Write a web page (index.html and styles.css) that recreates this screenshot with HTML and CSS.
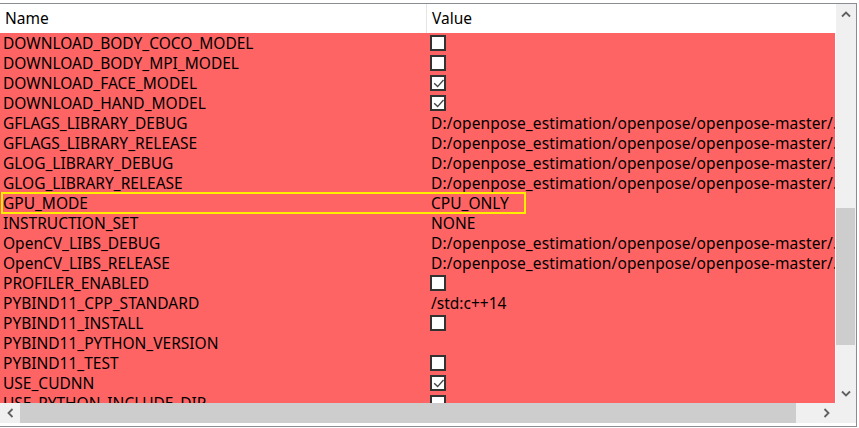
FILE: index.html
```html
<!DOCTYPE html>
<html>
<head>
<meta charset="utf-8">
<link rel="stylesheet" href="styles.css">
</head>
<body>
<div class="frame">
  <div class="viewport">
    <div class="header">
      <div class="hcell name-col">Name</div>
      <div class="hcell value-col">Value</div>
    </div>
    <div class="rows">
      <div class="row"><div class="cell name-col">DOWNLOAD_BODY_COCO_MODEL</div><div class="cell value-col"><span class="cb"></span></div></div>
      <div class="row"><div class="cell name-col">DOWNLOAD_BODY_MPI_MODEL</div><div class="cell value-col"><span class="cb"></span></div></div>
      <div class="row"><div class="cell name-col">DOWNLOAD_FACE_MODEL</div><div class="cell value-col"><span class="cb"><svg class="tick" width="12" height="12" viewBox="0 0 12 12"><path d="M1.2 6.3 L4.6 9.6 L10.5 3" fill="none" stroke="#444" stroke-width="1.4"/></svg></span></div></div>
      <div class="row"><div class="cell name-col">DOWNLOAD_HAND_MODEL</div><div class="cell value-col"><span class="cb"><svg class="tick" width="12" height="12" viewBox="0 0 12 12"><path d="M1.2 6.3 L4.6 9.6 L10.5 3" fill="none" stroke="#444" stroke-width="1.4"/></svg></span></div></div>
      <div class="row"><div class="cell name-col">GFLAGS_LIBRARY_DEBUG</div><div class="cell value-col path">D:/openpose_estimation/openpose/openpose-master/./3rdparty/windows/caffe3rdparty/lib/gflagsd.lib</div></div>
      <div class="row"><div class="cell name-col">GFLAGS_LIBRARY_RELEASE</div><div class="cell value-col path">D:/openpose_estimation/openpose/openpose-master/./3rdparty/windows/caffe3rdparty/lib/gflags.lib</div></div>
      <div class="row"><div class="cell name-col">GLOG_LIBRARY_DEBUG</div><div class="cell value-col path">D:/openpose_estimation/openpose/openpose-master/./3rdparty/windows/caffe3rdparty/lib/glogd.lib</div></div>
      <div class="row"><div class="cell name-col">GLOG_LIBRARY_RELEASE</div><div class="cell value-col path">D:/openpose_estimation/openpose/openpose-master/./3rdparty/windows/caffe3rdparty/lib/glog.lib</div></div>
      <div class="row marked"><div class="cell name-col">GPU_MODE</div><div class="cell value-col">CPU_ONLY</div><div class="mark"></div></div>
      <div class="row"><div class="cell name-col">INSTRUCTION_SET</div><div class="cell value-col">NONE</div></div>
      <div class="row"><div class="cell name-col">OpenCV_LIBS_DEBUG</div><div class="cell value-col path">D:/openpose_estimation/openpose/openpose-master/./3rdparty/windows/opencv/x64/vc15/lib/opencv_world345d.lib</div></div>
      <div class="row"><div class="cell name-col">OpenCV_LIBS_RELEASE</div><div class="cell value-col path">D:/openpose_estimation/openpose/openpose-master/./3rdparty/windows/opencv/x64/vc15/lib/opencv_world345.lib</div></div>
      <div class="row"><div class="cell name-col">PROFILER_ENABLED</div><div class="cell value-col"><span class="cb"></span></div></div>
      <div class="row"><div class="cell name-col">PYBIND11_CPP_STANDARD</div><div class="cell value-col">/std:c++14</div></div>
      <div class="row"><div class="cell name-col">PYBIND11_INSTALL</div><div class="cell value-col"><span class="cb"></span></div></div>
      <div class="row"><div class="cell name-col">PYBIND11_PYTHON_VERSION</div><div class="cell value-col"></div></div>
      <div class="row"><div class="cell name-col">PYBIND11_TEST</div><div class="cell value-col"><span class="cb"></span></div></div>
      <div class="row"><div class="cell name-col">USE_CUDNN</div><div class="cell value-col"><span class="cb"><svg class="tick" width="12" height="12" viewBox="0 0 12 12"><path d="M1.2 6.3 L4.6 9.6 L10.5 3" fill="none" stroke="#444" stroke-width="1.4"/></svg></span></div></div>
      <div class="row"><div class="cell name-col">USE_PYTHON_INCLUDE_DIR</div><div class="cell value-col"><span class="cb"></span></div></div>
    </div>
  </div>
  <div class="vscroll">
    <div class="sbtn"><svg width="10" height="7" viewBox="0 0 10 7"><path d="M1 5.5 L5 1.5 L9 5.5" fill="none" stroke="#606060" stroke-width="1.8"/></svg></div>
    <div class="vtrack"><div class="vthumb"></div></div>
    <div class="sbtn"><svg width="10" height="7" viewBox="0 0 10 7"><path d="M1 1.5 L5 5.5 L9 1.5" fill="none" stroke="#606060" stroke-width="1.8"/></svg></div>
  </div>
  <div class="hscroll">
    <div class="sbtn"><svg width="7" height="10" viewBox="0 0 7 10"><path d="M5.5 1 L1.5 5 L5.5 9" fill="none" stroke="#606060" stroke-width="1.8"/></svg></div>
    <div class="htrack"><div class="hthumb"></div></div>
    <div class="sbtn"><svg width="7" height="10" viewBox="0 0 7 10"><path d="M1.5 1 L5.5 5 L1.5 9" fill="none" stroke="#606060" stroke-width="1.8"/></svg></div>
  </div>
  <div class="corner"></div>
  <div class="foot"></div>
</div>
</body>
</html>
```
FILE: styles.css
```css
html, body {
  margin: 0;
  padding: 0;
  background: #ffffff;
}
body {
  padding-top: 3px;
  font-family: "Noto Sans", "Open Sans", sans-serif;
  font-size: 15.5px;
  color: #000;
}
.frame {
  width: 856px;
  display: grid;
  grid-template-columns: 836px 20px;
  grid-template-rows: 399px 20px 3px;
  border-top: 1px solid #8a8d93;
  border-right: 1px solid #8a8d93;
  border-bottom: 1px solid #8a8d93;
  background: #fff;
}
.viewport {
  overflow: hidden;
  background: #fff;
}
.header {
  display: flex;
  height: 29px;
  background: #fff;
}
.hcell {
  line-height: 29px;
  white-space: nowrap;
}
.header .name-col {
  width: 421px;
  padding-left: 5px;
  border-right: 1px solid #e5e5e5;
}
.header .value-col {
  padding-left: 5px;
}
.rows {
  width: 835px;
  background: #ff6464;
}
.row {
  position: relative;
  display: flex;
  height: 20px;
  line-height: 20px;
  white-space: nowrap;
  overflow: hidden;
}
.marked {
  overflow: visible;
}
.cell.name-col {
  width: 424px;
  padding-left: 3px;
  flex: none;
}
.cell.value-col {
  padding-left: 4px;
  flex: 1;
  overflow: hidden;
}
.cell.path {
  letter-spacing: 0.12px;
}
.cb {
  display: inline-block;
  box-sizing: border-box;
  width: 16px;
  height: 16px;
  margin-left: -1px;
  margin-top: 2px;
  border: 2px solid #333;
  background: #fff;
  vertical-align: top;
  position: relative;
}
.tick {
  position: absolute;
  left: 1px;
  top: 0px;
}
.mark {
  position: absolute;
  left: 1px;
  top: -1px;
  width: 525px;
  height: 22px;
  box-sizing: border-box;
  border: 2px solid #ffee00;
  pointer-events: none;
}
.vscroll {
  background: #f0f0f0;
  display: flex;
  flex-direction: column;
}
.sbtn {
  flex: none;
  width: 20px;
  height: 20px;
  display: flex;
  align-items: center;
  justify-content: center;
}
.vtrack {
  flex: 1;
}
.vthumb {
  margin-top: 184px;
  width: 19px;
  height: 137px;
  background: #cdcdcd;
}
.hscroll {
  background: #f0f0f0;
  display: flex;
}
.htrack {
  flex: 1;
}
.hthumb {
  width: 776px;
  height: 20px;
  background: #cdcdcd;
}
.corner {
  background: #f0f0f0;
}
.foot {
  grid-column: 1 / 3;
  background: #fff;
}
```
